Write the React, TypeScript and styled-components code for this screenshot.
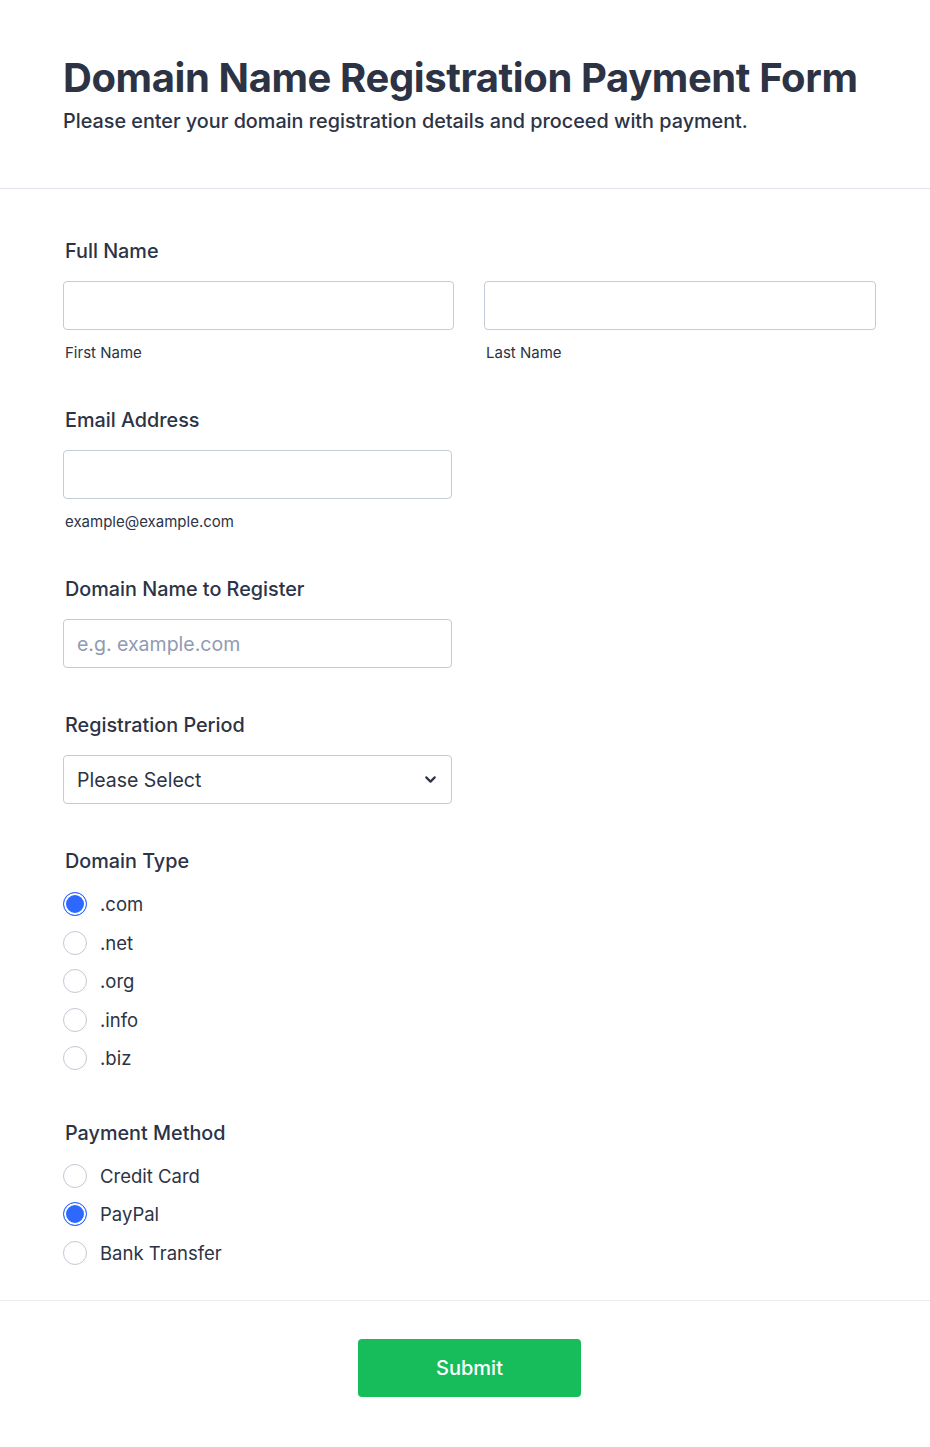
import React, { useState } from "react";
import styled, { createGlobalStyle } from "styled-components";

const GlobalStyle = createGlobalStyle`
  html, body {
    margin: 0;
    padding: 0;
    background: #ffffff;
  }
  body {
    font-family: Inter, "Noto Sans", "Liberation Sans", sans-serif;
    color: #2c3345;
  }
  * {
    box-sizing: border-box;
  }
`;

const Page = styled.div`
  width: 930px;
  min-height: 1447px;
  background: #fff;
`;

const Header = styled.header`
  padding: 54px 54px 53px 63px;
  border-bottom: 1px solid #dfe2e8;
`;

const Title = styled.h1`
  margin: 0;
  font-size: 40px;
  line-height: 48px;
  font-weight: 700;
  color: #2c3345;
  letter-spacing: -0.4px;
`;

const Subtitle = styled.p`
  margin: 5px 0 0;
  font-size: 19.8px;
  line-height: 28px;
  font-weight: 500;
  color: #2c3345;
`;

const Body = styled.div`
  padding: 50px 54px 28px 63px;
  border-bottom: 1px solid #e9ebf0;
`;

const Field = styled.div<{ $gap?: number }>`
  margin-bottom: ${(p) => p.$gap ?? 45}px;

  &:last-child {
    margin-bottom: 0;
  }
`;

const Label = styled.div`
  padding-left: 2px;
  font-size: 19.8px;
  line-height: 24px;
  font-weight: 500;
  color: #2c3345;
  margin-bottom: 18px;
`;

const Row = styled.div`
  display: grid;
  grid-template-columns: 391px 392px;
  column-gap: 30px;
`;

const Col = styled.div`
  display: flex;
  flex-direction: column;
`;

const Input = styled.input<{ $width?: number }>`
  width: ${(p) => (p.$width ? `${p.$width}px` : "100%")};
  height: 49px;
  border: 1px solid #c3cad8;
  border-radius: 4px;
  padding: 0 13px;
  font-family: inherit;
  font-size: 19.5px;
  color: #2c3345;
  background: #fff;
  outline: none;

  &::placeholder {
    color: #8f9bb3;
  }
`;

const SubLabel = styled.div`
  padding-left: 2px;
  margin-top: 13px;
  font-size: 15px;
  line-height: 20px;
  font-weight: 400;
  color: #2c3345;
`;

const SelectBox = styled.div`
  width: 389px;
  height: 49px;
  border: 1px solid #c3cad8;
  border-radius: 4px;
  padding: 0 12px 0 13px;
  display: flex;
  align-items: center;
  justify-content: space-between;
  font-size: 19.5px;
  color: #2c3345;
  background: #fff;
`;

const RadioList = styled.div`
  display: flex;
  flex-direction: column;
  margin-top: -6px;
`;

const RadioRow = styled.label`
  display: flex;
  align-items: center;
  height: 38.5px;
  gap: 13px;
  cursor: pointer;
  font-size: 18.5px;
  color: #2c3345;
`;

const RadioCircle = styled.span<{ $checked: boolean }>`
  width: 24px;
  height: 24px;
  border-radius: 50%;
  flex-shrink: 0;
  border: 1px solid ${(p) => (p.$checked ? "#2e69ff" : "#c3c8d3")};
  background: ${(p) => (p.$checked ? "#2e69ff" : "#fff")};
  box-shadow: ${(p) => (p.$checked ? "inset 0 0 0 2px #fff" : "none")};
`;

const Footer = styled.div`
  display: flex;
  justify-content: center;
  padding: 38px 54px 50px 63px;
`;

const SubmitButton = styled.button`
  width: 223px;
  height: 58px;
  border: none;
  border-radius: 4px;
  background: #18bd5b;
  color: #fff;
  font-family: inherit;
  font-size: 20px;
  font-weight: 500;
  cursor: pointer;
`;

const Chevron = () => (
  <svg width="17" height="17" viewBox="0 0 24 24" fill="none" stroke="#2c3345" strokeWidth="3" strokeLinecap="round" strokeLinejoin="round">
    <path d="M6 9l6 6 6-6" />
  </svg>
);

const Radios = ({ options, value, onChange }: { options: string[]; value: string; onChange: (v: string) => void }) => (
  <RadioList>
    {options.map((o) => (
      <RadioRow key={o} onClick={() => onChange(o)}>
        <RadioCircle $checked={value === o} />
        {o}
      </RadioRow>
    ))}
  </RadioList>
);

export default function App() {
  const [domainType, setDomainType] = useState(".com");
  const [payment, setPayment] = useState("PayPal");

  return (
    <Page>
      <GlobalStyle />
      <Header>
        <Title>Domain Name Registration Payment Form</Title>
        <Subtitle>Please enter your domain registration details and proceed with payment.</Subtitle>
      </Header>
      <Body>
        <Field>
          <Label>Full Name</Label>
          <Row>
            <Col>
              <Input type="text" />
              <SubLabel>First Name</SubLabel>
            </Col>
            <Col>
              <Input type="text" />
              <SubLabel>Last Name</SubLabel>
            </Col>
          </Row>
        </Field>
        <Field>
          <Label>Email Address</Label>
          <Input type="email" $width={389} />
          <SubLabel>example@example.com</SubLabel>
        </Field>
        <Field>
          <Label>Domain Name to Register</Label>
          <Input type="text" $width={389} placeholder="e.g. example.com" />
        </Field>
        <Field>
          <Label>Registration Period</Label>
          <SelectBox>
            <span>Please Select</span>
            <Chevron />
          </SelectBox>
        </Field>
        <Field $gap={43}>
          <Label>Domain Type</Label>
          <Radios options={[".com", ".net", ".org", ".info", ".biz"]} value={domainType} onChange={setDomainType} />
        </Field>
        <Field>
          <Label>Payment Method</Label>
          <Radios options={["Credit Card", "PayPal", "Bank Transfer"]} value={payment} onChange={setPayment} />
        </Field>
      </Body>
      <Footer>
        <SubmitButton type="button">Submit</SubmitButton>
      </Footer>
    </Page>
  );
}
